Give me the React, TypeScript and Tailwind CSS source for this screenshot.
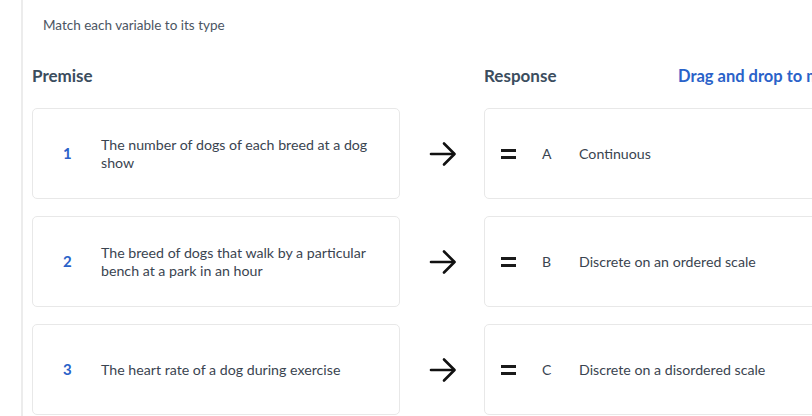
import React from "react";

const rows = [
  { n: "1", premise: ["The number of dogs of each breed at a dog", "show"], letter: "A", resp: "Continuous" },
  { n: "2", premise: ["The breed of dogs that walk by a particular", "bench at a park in an hour"], letter: "B", resp: "Discrete on an ordered scale" },
  { n: "3", premise: ["The heart rate of a dog during exercise"], letter: "C", resp: "Discrete on a disordered scale" },
];

function Arrow() {
  return (
    <svg width="28" height="26" viewBox="0 0 28 26" fill="none">
      <path d="M2 13 H25" stroke="#111" strokeWidth="2.6" strokeLinecap="round" />
      <path d="M15 2.5 L25.5 13 L15 23.5" stroke="#111" strokeWidth="2.6" strokeLinecap="round" strokeLinejoin="round" />
    </svg>
  );
}

function Equals() {
  return (
    <div className="flex flex-col gap-[4px] w-[15px]">
      <div className="h-[3px] bg-[#1a1a1a]" />
      <div className="h-[3px] bg-[#1a1a1a]" />
    </div>
  );
}

export default function App() {
  return (
    <div
      className="w-[812px] h-[416px] overflow-hidden bg-white flex"
      style={{ fontFamily: "Lato, 'Open Sans', sans-serif" }}
    >
      <div className="w-[21px] shrink-0" />
      <div className="w-[2px] shrink-0 bg-[#ececec]" />
      <div className="flex-1 pl-[9px] min-w-0">
        <div className="pl-[11px] pt-[15px] h-[36px] text-[13.5px] text-[#4b5563]">Match each variable to its type</div>
        <div className="flex items-center h-[40px] mt-[20px]">
          <div className="w-[452px] shrink-0 text-[17px] font-bold text-[#3b4d5e]">Premise</div>
          <div className="w-[194px] shrink-0 text-[17px] font-bold text-[#3b4d5e]">Response</div>
          <div className="whitespace-nowrap text-[16.5px] font-bold text-[#2a62c9]">Drag and drop to match</div>
        </div>
        <div className="mt-[12px] flex flex-col gap-[17px]">
          {rows.map((r) => (
            <div key={r.n} className="flex items-center">
              <div className="w-[368px] h-[91px] shrink-0 border border-[#e8e8e8] rounded-[5px] flex items-center">
                <div className="w-[68px] shrink-0 pl-[30px] text-[15px] font-bold text-[#2a62c9]">{r.n}</div>
                <div className="text-[14.2px] leading-[18px] text-[#3a4450]">
                  {r.premise.map((l, i) => (
                    <div key={i}>{l}</div>
                  ))}
                </div>
              </div>
              <div className="w-[84px] shrink-0 flex justify-center pl-[2px]">
                <Arrow />
              </div>
              <div className="w-[400px] h-[91px] shrink-0 border border-[#e8e8e8] rounded-[5px] flex items-center">
                <div className="w-[57px] shrink-0 pl-[16px]">
                  <Equals />
                </div>
                <div className="w-[37px] shrink-0 text-[14px] text-[#3a4450]">{r.letter}</div>
                <div className="text-[14.2px] text-[#3a4450]">{r.resp}</div>
              </div>
            </div>
          ))}
        </div>
      </div>
    </div>
  );
}
